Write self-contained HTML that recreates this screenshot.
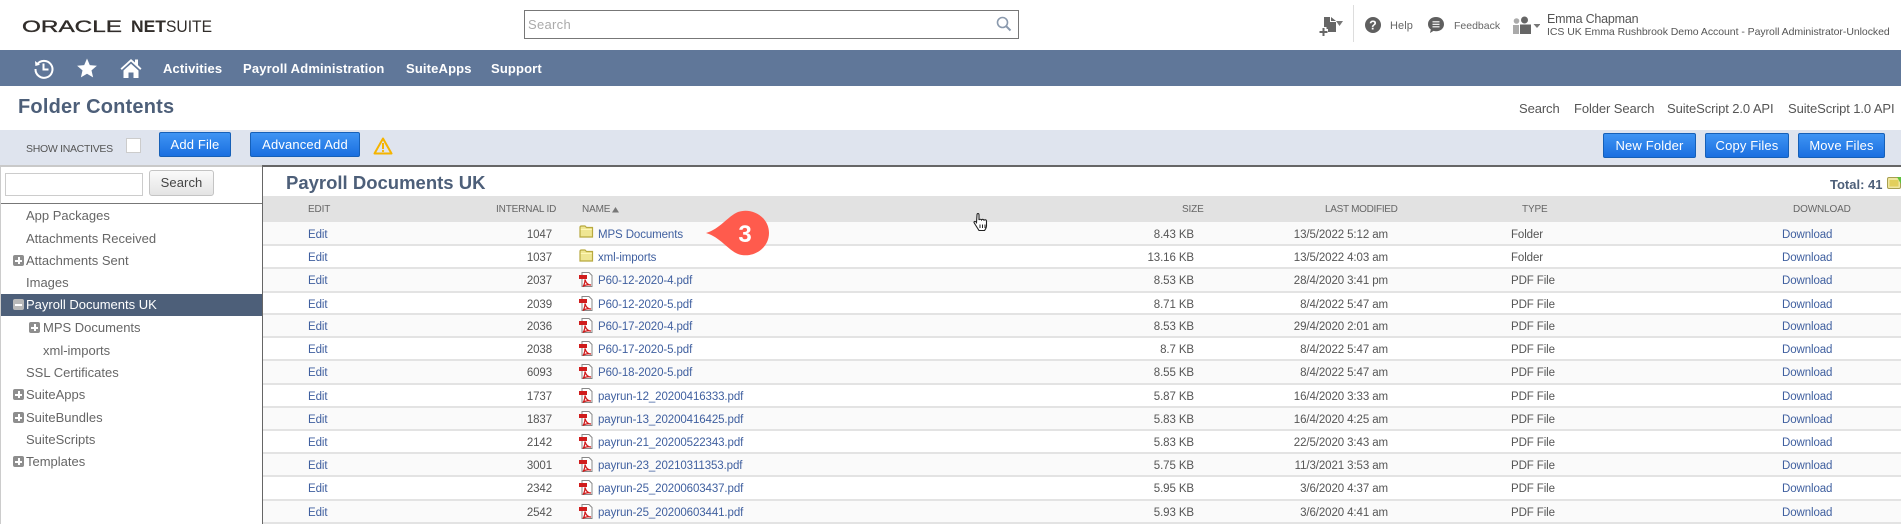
<!DOCTYPE html>
<html lang="en"><head><meta charset="utf-8"><title>Folder Contents</title>
<style>
*{box-sizing:border-box}
html,body{margin:0;padding:0;width:1901px;height:524px;overflow:hidden;background:#fff}
body{position:relative;font-family:"Liberation Sans",sans-serif;color:#555;font-size:13px}
.a{position:absolute;white-space:nowrap}
.nav{left:0;top:50px;width:1901px;height:36px;background:#607799}
.nl{top:51px;height:36px;line-height:36px;color:#fff;font-weight:bold;font-size:13px;letter-spacing:.15px}
.btn{top:132px;height:25px;line-height:23px;text-align:center;color:#fff;font-size:13px;letter-spacing:.15px;border:1px solid #1660b8;border-radius:2px;background:linear-gradient(#3f94f3,#1a6fe0)}
.tr{top:101px;line-height:16px;font-size:13px;color:#555;letter-spacing:-.1px}
.tree{height:22px;line-height:22px;font-size:13px;color:#666;left:26px}
.pm{width:11px;height:11px;border-radius:2px;background:#8e8e8e;left:13px}
.pm:before{content:"";position:absolute;left:2px;top:4.5px;width:7px;height:2px;background:#fff}
.pm.p:after{content:"";position:absolute;left:4.5px;top:2px;width:2px;height:7px;background:#fff}
.h{top:197px;height:26px;line-height:26px;font-size:10px;color:#666;letter-spacing:-.15px}
.r{left:263px;width:1638px;border-bottom:2px solid #e3e3e3;background:#fff}
.r.g{background:#fafafa}
.r span{position:absolute;top:0;line-height:25px;white-space:nowrap;font-size:11.5px;letter-spacing:-.1px;color:#555}
.r a{color:#3f5f9f}
.r .e{left:45px}
.r .i{right:1349px}
.r .n{left:335px}
.r .s{right:707px}
.r .m{right:513px}
.r .t{left:1248px}
.r .d{left:1519px}
.r svg{position:absolute;left:316px;top:3px}
</style></head><body>

<svg class="a" style="left:0;top:0" width="230" height="50">
<text x="22" y="32" font-family="Liberation Sans" font-size="17" fill="#312d2a" stroke="#312d2a" stroke-width=".35" textLength="100" lengthAdjust="spacingAndGlyphs">ORACLE</text>
<text x="131" y="32" font-family="Liberation Sans" font-size="17" font-weight="bold" fill="#312d2a" textLength="35" lengthAdjust="spacingAndGlyphs">NET</text>
<text x="166" y="32" font-family="Liberation Sans" font-size="17" fill="#312d2a" textLength="46" lengthAdjust="spacingAndGlyphs">SUITE</text>
</svg>

<div class="a" style="left:524px;top:10px;width:495px;height:29px;border:1px solid #777;background:#fff"></div>
<div class="a" style="left:528px;top:16px;font-size:13px;line-height:18px;color:#aaa;letter-spacing:.3px">Search</div>
<svg class="a" style="left:995px;top:15px" width="18" height="18" viewBox="0 0 18 18"><circle cx="7.5" cy="7.5" r="5" fill="none" stroke="#8a99ad" stroke-width="1.6"/><path d="M11.2 11.2L15.5 15.5" stroke="#8a99ad" stroke-width="2"/></svg>

<svg class="a" style="left:1319px;top:15px" width="22" height="22" viewBox="0 0 22 22"><path d="M5 2h6v5h6v10H5z" fill="#666"/><path d="M12 2l5 4h-5z" fill="#666"/><path d="M5 12v9M0 16.500h9" stroke="#fff" stroke-width="5"/><path d="M4.500 13v8M.5 17h8" stroke="#666" stroke-width="2"/></svg>
<svg class="a" style="left:1336px;top:21px" width="8" height="6"><path d="M0 0h7L3.500 5z" fill="#777"/></svg>
<div class="a" style="left:1353px;top:5px;width:1px;height:37px;background:#ddd"></div>
<svg class="a" style="left:1364px;top:16px" width="18" height="18" viewBox="0 0 18 18"><circle cx="9" cy="9" r="8" fill="#5f5f5f"/><text x="9" y="13.500" text-anchor="middle" font-family="Liberation Sans" font-weight="bold" font-size="12.500" fill="#fff">?</text></svg>
<div class="a" style="left:1390px;top:18px;font-size:11px;line-height:16px;color:#666;letter-spacing:.1px">Help</div>
<svg class="a" style="left:1427px;top:16px" width="18" height="18" viewBox="0 0 18 18"><path d="M9 1c4.500 0 8 3 8 7.200s-3.500 7-8 7c-1 0-1.800-.1-2.500-.3L3 17l.8-3.500C2 12.300 1 10.400 1 8.200 1 4 4.500 1 9 1z" fill="#5f5f5f"/><path d="M5.500 5.800h7M5.500 8.300h7M5.500 10.800h7" stroke="#fff" stroke-width="1.200"/></svg>
<div class="a" style="left:1454px;top:18px;font-size:10.5px;line-height:16px;color:#666">Feedback</div>
<svg class="a" style="left:1512px;top:16px" width="28" height="20" viewBox="0 0 28 20"><circle cx="4.500" cy="5" r="2.800" fill="#aaa"/><path d="M1 9h6v9H1z" fill="#aaa"/><circle cx="12.500" cy="4" r="3.500" fill="#666"/><path d="M8 8.500h11V18H8z" fill="#666"/><path d="M21.500 8h7L25 12z" fill="#777"/></svg>
<div class="a" style="left:1547px;top:11px;font-size:12.5px;line-height:16px;color:#555;letter-spacing:-.2px">Emma Chapman</div>
<div class="a" style="left:1547px;top:25px;font-size:10.5px;line-height:15px;color:#555;letter-spacing:-.05px">ICS UK Emma Rushbrook Demo Account - Payroll Administrator-Unlocked</div>

<div class="a nav"></div>
<svg class="a" style="left:31px;top:56px" width="26" height="26" viewBox="0 0 26 26"><path d="M6 8.500A8.500 8.500 0 1 1 4.500 13" fill="none" stroke="#fff" stroke-width="2"/><path d="M4 5l.4 5 4.600-1.300z" fill="#fff"/><path d="M12.500 7.500V13.500H17.500" fill="none" stroke="#fff" stroke-width="2"/></svg>
<svg class="a" style="left:76px;top:57px" width="22" height="22" viewBox="0 0 22 22"><path d="M11 1.500l2.800 6.600 7.100.6-5.400 4.700 1.600 7L11 16.700l-6.100 3.700 1.600-7L1.100 8.700l7.100-.6z" fill="#fff"/></svg>
<svg class="a" style="left:119px;top:56px" width="24" height="24" viewBox="0 0 24 24"><path d="M1.500 12.500L12 3l4 3.500V3.500h3v5.600l3.500 3.400-1.300 1.400L12 5.500 2.800 13.900z" fill="#fff"/><path d="M4.500 14.500L12 7.700l7.500 6.800V22H14.500v-5.500h-5V22H4.500z" fill="#fff"/></svg>
<div class="a nl" style="left:163px">Activities</div>
<div class="a nl" style="left:243px">Payroll Administration</div>
<div class="a nl" style="left:406px">SuiteApps</div>
<div class="a nl" style="left:491px">Support</div>

<div class="a" style="left:18px;top:94px;font-size:20px;line-height:26px;font-weight:bold;color:#4d5f79;letter-spacing:.2px">Folder Contents</div>
<div class="a tr" style="left:1519px">Search</div>
<div class="a tr" style="left:1574px">Folder Search</div>
<div class="a tr" style="left:1667px">SuiteScript 2.0 API</div>
<div class="a tr" style="left:1788px">SuiteScript 1.0 API</div>

<div class="a" style="left:0;top:130px;width:1901px;height:35px;background:#dfe4ee"></div>
<div class="a" style="left:26px;top:142px;font-size:10.5px;line-height:14px;color:#555;letter-spacing:-.3px">SHOW INACTIVES</div>
<div class="a" style="left:126px;top:138px;width:15px;height:15px;background:#fff;border:1px solid #ccc"></div>
<div class="a btn" style="left:159px;width:72px">Add File</div>
<div class="a btn" style="left:250px;width:110px">Advanced Add</div>
<svg class="a" style="left:373px;top:137px" width="20" height="18" viewBox="0 0 20 18"><path d="M10 1.500L18.500 16.500H1.500z" fill="none" stroke="#f5b400" stroke-width="2" stroke-linejoin="round"/><path d="M10 6v6" stroke="#f5b400" stroke-width="2"/><circle cx="10" cy="14" r="1.100" fill="#f5b400"/></svg>
<div class="a btn" style="left:1603px;width:93px;top:133px">New Folder</div>
<div class="a btn" style="left:1705px;width:84px;top:133px">Copy Files</div>
<div class="a btn" style="left:1798px;width:87px;top:133px">Move Files</div>

<div class="a" style="left:0;top:165px;width:1901px;height:2px;background:#c9c9c9"></div>
<div class="a" style="left:262px;top:165px;width:1639px;height:2px;background:#666"></div>
<div class="a" style="left:0;top:167px;width:1px;height:357px;background:#ccc"></div>
<div class="a" style="left:262px;top:166px;width:1px;height:358px;background:#666"></div>

<div class="a" style="left:5px;top:173px;width:138px;height:23px;border:1px solid #ccc;background:#fff"></div>
<div class="a" style="left:149px;top:170px;width:65px;height:26px;line-height:24px;text-align:center;font-size:13px;color:#444;letter-spacing:.1px;border:1px solid #c4c4c4;border-radius:3px;background:linear-gradient(#fafafa,#e4e4e4)">Search</div>
<div class="a" style="left:1px;top:203px;width:261px;height:1px;background:#777"></div>

<div class="a tree" style="top:205px">App Packages</div>
<div class="a tree" style="top:228px">Attachments Received</div>
<div class="a pm p" style="top:255px"></div><div class="a tree" style="top:250px">Attachments Sent</div>
<div class="a tree" style="top:272px">Images</div>
<div class="a" style="left:1px;top:294px;width:261px;height:22px;background:#4d5f79"></div>
<div class="a pm" style="top:299px;background:#b9b9b9"></div><div class="a tree" style="top:294px;color:#fff">Payroll Documents UK</div>
<div class="a pm p" style="top:322px;left:29px"></div><div class="a tree" style="top:317px;left:43px">MPS Documents</div>
<div class="a tree" style="top:340px;left:43px">xml-imports</div>
<div class="a tree" style="top:362px">SSL Certificates</div>
<div class="a pm p" style="top:389px"></div><div class="a tree" style="top:384px">SuiteApps</div>
<div class="a pm p" style="top:412px"></div><div class="a tree" style="top:407px">SuiteBundles</div>
<div class="a tree" style="top:429px">SuiteScripts</div>
<div class="a pm p" style="top:456px"></div><div class="a tree" style="top:451px">Templates</div>

<div class="a" style="left:286px;top:170px;font-size:18.5px;line-height:26px;font-weight:bold;color:#4d5f79">Payroll Documents UK</div>
<div class="a" style="left:1830px;top:177px;font-size:13px;line-height:16px;font-weight:bold;color:#4d5f79">Total: 41</div>
<svg class="a" style="left:1887px;top:176px" width="14" height="14" viewBox="0 0 14 14"><rect x=".5" y="1.500" width="13" height="11" rx="1.500" fill="#efe7a0" stroke="#a89f50"/><rect x="2.500" y="4" width="9" height="6.500" fill="#e2cf5c"/><path d="M10 1l4 0v7z" fill="#5ec23c"/></svg>

<div class="a" style="left:263px;top:196px;width:1638px;height:26px;background:#e2e2e2"></div>
<div class="a h" style="left:308px">EDIT</div>
<div class="a h" style="left:496px">INTERNAL ID</div>
<div class="a h" style="left:582px">NAME</div>
<svg class="a" style="left:612px;top:207px" width="7" height="6"><path d="M3.500 0L7 5.500H0z" fill="#777"/></svg>
<div class="a h" style="left:1182px">SIZE</div>
<div class="a h" style="left:1325px;letter-spacing:-.3px">LAST MODIFIED</div>
<div class="a h" style="left:1522px">TYPE</div>
<div class="a h" style="left:1793px">DOWNLOAD</div>

<svg width="0" height="0" style="position:absolute"><defs>
<symbol id="fo" viewBox="0 1 15 15"><path d="M1 3.500Q1 2 2.500 2H6l1.500 1.500h6V13H1z" fill="#efe693" stroke="#b8a93f" stroke-width="1.200"/><path d="M1.800 5.500h11" stroke="#fff7b5"/></symbol>
<symbol id="pd" viewBox="0 0 15 15"><path d="M3 .5h7l3 3V14.500H3z" fill="#fff" stroke="#888"/><rect x="0" y="3" width="8" height="4" fill="#d01c1c"/><path d="M6 7.500c1 4 3 5.500 6 5.500-3-.5-6 0-8 1.500 1.500-2 2-4 2-7z" fill="none" stroke="#d01c1c" stroke-width="1.300"/></symbol>
</defs></svg>

<div class="a r g" style="top:222px;height:24px"><span class="e" style="top:1px"><a>Edit</a></span><span class="i" style="top:1px">1047</span><svg width="15" height="15"><use href="#fo"/></svg><span class="n" style="top:1px"><a>MPS Documents</a></span><span class="s" style="top:1px">8.43 KB</span><span class="m" style="top:1px">13/5/2022 5:12 am</span><span class="t" style="top:1px">Folder</span><span class="d" style="top:1px"><a>Download</a></span></div>
<div class="a r" style="top:246px;height:23px"><span class="e"><a>Edit</a></span><span class="i">1037</span><svg width="15" height="15"><use href="#fo"/></svg><span class="n"><a>xml-imports</a></span><span class="s">13.16 KB</span><span class="m">13/5/2022 4:03 am</span><span class="t">Folder</span><span class="d"><a>Download</a></span></div>
<div class="a r g" style="top:269px;height:24px"><span class="e"><a>Edit</a></span><span class="i">2037</span><svg width="15" height="15"><use href="#pd"/></svg><span class="n"><a>P60-12-2020-4.pdf</a></span><span class="s">8.53 KB</span><span class="m">28/4/2020 3:41 pm</span><span class="t">PDF File</span><span class="d"><a>Download</a></span></div>
<div class="a r" style="top:293px;height:22px"><span class="e"><a>Edit</a></span><span class="i">2039</span><svg width="15" height="15"><use href="#pd"/></svg><span class="n"><a>P60-12-2020-5.pdf</a></span><span class="s">8.71 KB</span><span class="m">8/4/2022 5:47 am</span><span class="t">PDF File</span><span class="d"><a>Download</a></span></div>
<div class="a r g" style="top:315px;height:23px"><span class="e"><a>Edit</a></span><span class="i">2036</span><svg width="15" height="15"><use href="#pd"/></svg><span class="n"><a>P60-17-2020-4.pdf</a></span><span class="s">8.53 KB</span><span class="m">29/4/2020 2:01 am</span><span class="t">PDF File</span><span class="d"><a>Download</a></span></div>
<div class="a r" style="top:338px;height:23px"><span class="e"><a>Edit</a></span><span class="i">2038</span><svg width="15" height="15"><use href="#pd"/></svg><span class="n"><a>P60-17-2020-5.pdf</a></span><span class="s">8.7 KB</span><span class="m">8/4/2022 5:47 am</span><span class="t">PDF File</span><span class="d"><a>Download</a></span></div>
<div class="a r g" style="top:361px;height:24px"><span class="e"><a>Edit</a></span><span class="i">6093</span><svg width="15" height="15"><use href="#pd"/></svg><span class="n"><a>P60-18-2020-5.pdf</a></span><span class="s">8.55 KB</span><span class="m">8/4/2022 5:47 am</span><span class="t">PDF File</span><span class="d"><a>Download</a></span></div>
<div class="a r" style="top:385px;height:23px"><span class="e"><a>Edit</a></span><span class="i">1737</span><svg width="15" height="15"><use href="#pd"/></svg><span class="n"><a>payrun-12_20200416333.pdf</a></span><span class="s">5.87 KB</span><span class="m">16/4/2020 3:33 am</span><span class="t">PDF File</span><span class="d"><a>Download</a></span></div>
<div class="a r g" style="top:408px;height:23px"><span class="e"><a>Edit</a></span><span class="i">1837</span><svg width="15" height="15"><use href="#pd"/></svg><span class="n"><a>payrun-13_20200416425.pdf</a></span><span class="s">5.83 KB</span><span class="m">16/4/2020 4:25 am</span><span class="t">PDF File</span><span class="d"><a>Download</a></span></div>
<div class="a r" style="top:431px;height:23px"><span class="e"><a>Edit</a></span><span class="i">2142</span><svg width="15" height="15"><use href="#pd"/></svg><span class="n"><a>payrun-21_20200522343.pdf</a></span><span class="s">5.83 KB</span><span class="m">22/5/2020 3:43 am</span><span class="t">PDF File</span><span class="d"><a>Download</a></span></div>
<div class="a r g" style="top:454px;height:23px"><span class="e"><a>Edit</a></span><span class="i">3001</span><svg width="15" height="15"><use href="#pd"/></svg><span class="n"><a>payrun-23_20210311353.pdf</a></span><span class="s">5.75 KB</span><span class="m">11/3/2021 3:53 am</span><span class="t">PDF File</span><span class="d"><a>Download</a></span></div>
<div class="a r" style="top:477px;height:24px"><span class="e"><a>Edit</a></span><span class="i">2342</span><svg width="15" height="15"><use href="#pd"/></svg><span class="n"><a>payrun-25_20200603437.pdf</a></span><span class="s">5.95 KB</span><span class="m">3/6/2020 4:37 am</span><span class="t">PDF File</span><span class="d"><a>Download</a></span></div>
<div class="a r g" style="top:501px;height:23px"><span class="e"><a>Edit</a></span><span class="i">2542</span><svg width="15" height="15"><use href="#pd"/></svg><span class="n"><a>payrun-25_20200603441.pdf</a></span><span class="s">5.93 KB</span><span class="m">3/6/2020 4:41 am</span><span class="t">PDF File</span><span class="d"><a>Download</a></span></div>

<svg class="a" style="left:700px;top:205px" width="72" height="56" viewBox="0 0 72 56"><path d="M6 28C20 24 28 11 38 7c14-5 31 5 31 21s-17 26-31 21C28 45 20 32 6 28z" fill="#ff5b4d"/><text x="45" y="37" text-anchor="middle" font-family="Liberation Sans" font-weight="bold" font-size="24" fill="#fff">3</text></svg>

<svg class="a" style="left:973px;top:212px" width="16" height="20" viewBox="0 0 16 20"><path d="M4 3c0-2 2-2 2 0v5c.5-1 2-1 2.500 0 .5-1 2-1 2.500.2.800-.8 2.500-.5 2.500 1V14c0 2-1 3-2 4.500H6L2.500 13 1 10.500c0-1.500 1.500-1.500 2.500 0z" fill="#fff" stroke="#222" stroke-width="1.100"/><path d="M7 12.500v3.500M9.500 12.500v3.500M12 12.500v3.500" stroke="#222"/></svg>
</body></html>
